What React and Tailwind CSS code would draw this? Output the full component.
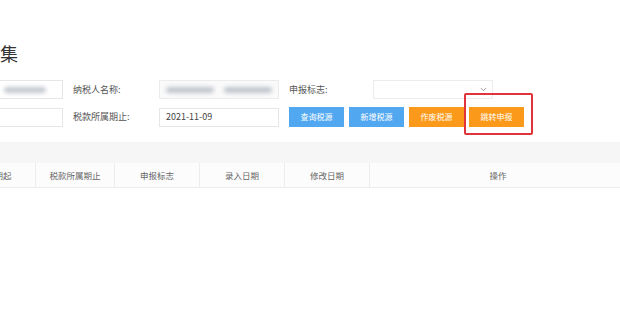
import { ChevronDown } from 'lucide-react';

const font = { fontFamily: '"Noto Sans CJK SC", "Noto Sans", sans-serif' };

const Blur = ({ className }) => (
    <div className={`h-[6px] rounded-sm bg-gray-400/60 blur-[2px] ${className}`} />
);

const buttons = [
    { label: '查询税源', color: 'bg-[#52a8f0]' },
    { label: '新增税源', color: 'bg-[#52a8f0]' },
    { label: '作废税源', color: 'bg-[#fb9a1a]' },
    { label: '跳转申报', color: 'bg-[#fb9a1a]' },
];

const columns = [
    { title: '税款所属期起', w: 'w-[99px]' },
    { title: '税款所属期止', w: 'w-[79px]' },
    { title: '申报标志', w: 'w-[85px]' },
    { title: '录入日期', w: 'w-[85px]' },
    { title: '修改日期', w: 'w-[85px]' },
    { title: '操作', w: 'w-[256px]' },
];

const App = () => {
    return (
        <div className="relative h-[309px] w-[620px] overflow-hidden bg-white text-[9px] text-[#555]" style={font}>
            {/* title */}
            <div className="pt-[40px] h-[80px] text-[18px] leading-[26px] text-[#333]">集</div>

            {/* search form */}
            <div className="-ml-[57px] flex flex-col gap-[8px]">
                <div className="flex items-center h-[19px]">
                    <div className="w-[120px] h-[19px] border border-[#e6e6e6] flex items-center pl-[60px]">
                        <Blur className="w-[42px]" />
                    </div>
                    <div className="w-[96px] pl-[10px]">纳税人名称:</div>
                    <div className="w-[120px] h-[19px] border border-[#ececec] bg-[#fafafa] flex items-center gap-[10px] px-[6px]">
                        <Blur className="w-[50px]" />
                        <Blur className="w-[50px]" />
                    </div>
                    <div className="w-[94px] pl-[10px]">申报标志:</div>
                    <div className="w-[120px] h-[19px] border border-[#ececec] flex items-center justify-end pr-[4px]">
                        <ChevronDown className="w-[9px] h-[9px] text-[#777]" strokeWidth={2} />
                    </div>
                </div>
                <div className="flex items-center h-[20px]">
                    <div className="w-[120px] h-[19px] border border-[#e6e6e6]" />
                    <div className="w-[96px] pl-[10px]">税款所属期止:</div>
                    <div className="w-[120px] h-[19px] border border-[#e6e6e6] flex items-center px-[6px] text-[#444]">2021-11-09</div>
                    <div className="ml-[10px] flex gap-[5px]">
                        {buttons.map((b) => (
                            <div key={b.label} className={`${b.color} w-[55px] h-[20px] flex items-center justify-center text-white text-[8px]`}>
                                {b.label}
                            </div>
                        ))}
                    </div>
                </div>
            </div>

            {/* table */}
            <div className="mt-[15px] h-[21px] bg-[#f6f6f6]" />
            <div className="-ml-[63px] flex h-[25px] border-b border-[#ececec] bg-[#fcfcfc] text-[#666] text-[8.5px]">
                {columns.map((c, i) => (
                    <div key={c.title} className={`${c.w} shrink-0 flex items-center justify-center ${i < columns.length - 1 ? 'border-r border-[#ececec]' : ''}`}>
                        {c.title}
                    </div>
                ))}
            </div>

            {/* highlight */}
            <div className="absolute left-[464px] top-[93px] w-[69px] h-[42px] border-2 border-[#e0343a] rounded-[2px]" />
        </div>
    );
};

export default App;
